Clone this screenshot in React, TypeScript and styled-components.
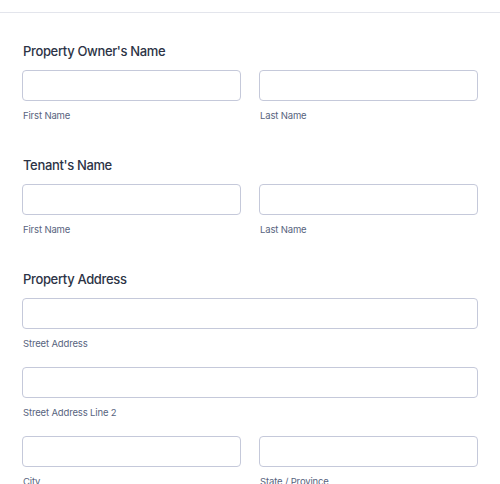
import React from 'react';
import styled, { createGlobalStyle } from 'styled-components';

const GlobalStyle = createGlobalStyle`
  html, body {
    margin: 0;
    padding: 0;
    background: #ffffff;
  }
  body {
    font-family: Inter, "Noto Sans", "Liberation Sans", sans-serif;
    -webkit-font-smoothing: antialiased;
  }
`;

const Page = styled.div`
  width: 500px;
  min-height: 484px;
  background: #ffffff;
  overflow: hidden;
`;

const Divider = styled.div`
  margin-top: 12px;
  height: 1px;
  background: #e3e5ec;
`;

const Form = styled.form`
  display: flex;
  flex-direction: column;
  padding: 30px 22px 0 22px;
  gap: 35px;
`;

const Section = styled.section`
  display: flex;
  flex-direction: column;
`;

const Heading = styled.h3`
  margin: 0 0 11px 1px;
  font-size: 13px;
  line-height: 16px;
  font-weight: 500;
  letter-spacing: -0.35px;
  color: #2c3345;
`;

const Rows = styled.div`
  display: flex;
  flex-direction: column;
  gap: 17px;
`;

const Row = styled.div<{ $cols: number }>`
  display: grid;
  grid-template-columns: repeat(${({ $cols }) => $cols}, 1fr);
  column-gap: 18px;
`;

const Field = styled.div`
  display: flex;
  flex-direction: column;
  gap: 9px;
`;

const Input = styled.input`
  box-sizing: border-box;
  width: 100%;
  height: 31px;
  margin: 0;
  padding: 0 10px;
  border: 1px solid #c5c9da;
  border-radius: 4px;
  background: #ffffff;
  font-family: inherit;
  font-size: 12px;
  color: #2c3345;
  outline: none;
`;

const SubLabel = styled.label`
  font-size: 9.5px;
  line-height: 12px;
  letter-spacing: -0.15px;
  color: #57647e;
  padding-left: 1px;
`;

type FieldDef = { label: string };

const sections: { title: string; rows: FieldDef[][] }[] = [
  {
    title: "Property Owner's Name",
    rows: [[{ label: 'First Name' }, { label: 'Last Name' }]],
  },
  {
    title: "Tenant's Name",
    rows: [[{ label: 'First Name' }, { label: 'Last Name' }]],
  },
  {
    title: 'Property Address',
    rows: [
      [{ label: 'Street Address' }],
      [{ label: 'Street Address Line 2' }],
      [{ label: 'City' }, { label: 'State / Province' }],
    ],
  },
];

export const App: React.FC = () => {
  return (
    <Page>
      <GlobalStyle />
      <Divider />
      <Form onSubmit={(e) => e.preventDefault()}>
        {sections.map((section) => (
          <Section key={section.title}>
            <Heading>{section.title}</Heading>
            <Rows>
              {section.rows.map((row, i) => (
                <Row key={i} $cols={row.length}>
                  {row.map((f) => (
                    <Field key={f.label}>
                      <Input type="text" />
                      <SubLabel>{f.label}</SubLabel>
                    </Field>
                  ))}
                </Row>
              ))}
            </Rows>
          </Section>
        ))}
      </Form>
    </Page>
  );
};

export default App;
